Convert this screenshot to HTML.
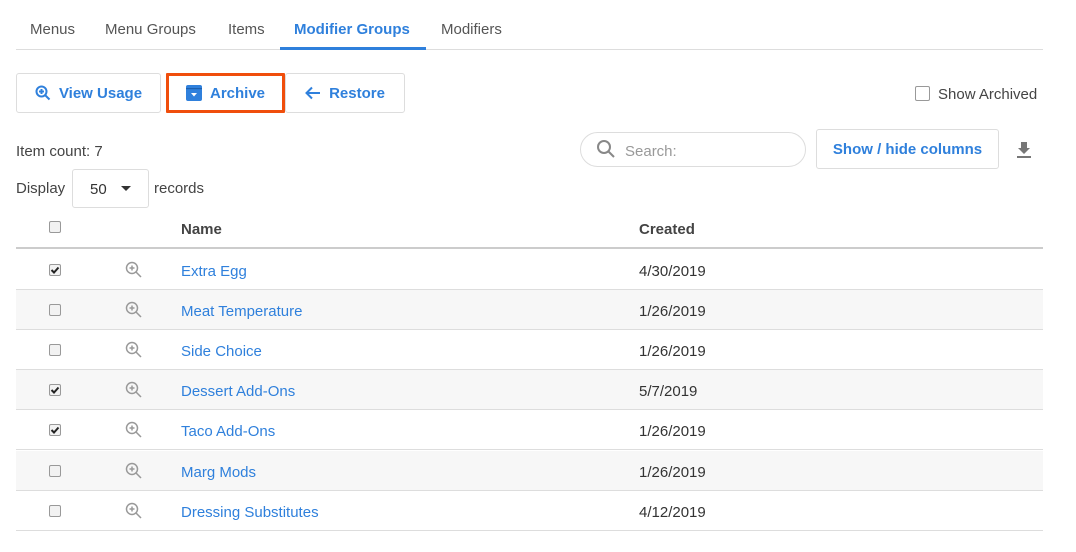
<!DOCTYPE html>
<html><head><style>
*{box-sizing:border-box;margin:0;padding:0}
body{width:1076px;height:552px;background:#fff;font-family:"Liberation Sans",sans-serif;color:#444;font-size:15px;position:relative;overflow:hidden}
.a{position:absolute}
.tab{position:absolute;top:21px;font-size:15px;color:#555}
.btn{position:absolute;border:1px solid #ddd;border-radius:3px;background:#fff;color:#2f80dc;font-weight:bold;font-size:15px;display:flex;align-items:center;justify-content:center;gap:8px}
.row{position:absolute;left:16px;width:1027px;height:40px;border-bottom:1px solid #ddd}
.row.g{background:#f7f7f7}
.cb{position:absolute;left:33px;top:14px;width:12px;height:12px;border:1px solid #999;border-radius:2px;background:#f2f2f2}
.row .mag{position:absolute;left:109px;top:11px}
.row .n{position:absolute;left:165px;top:13px;color:#2f80dc}
.row .d{position:absolute;left:623px;top:13px;color:#333}
</style></head><body>
<div class="tab" style="left:30px">Menus</div>
<div class="tab" style="left:105px">Menu Groups</div>
<div class="tab" style="left:228px">Items</div>
<div class="tab" style="left:294px;color:#2f80dc;font-weight:bold">Modifier Groups</div>
<div class="tab" style="left:441px">Modifiers</div>
<div class="a" style="left:16px;top:49px;width:1027px;height:1px;background:#ddd"></div>
<div class="a" style="left:280px;top:47px;width:146px;height:3px;background:#2f80dc"></div>

<div class="btn" style="left:16px;top:73px;width:145px;height:40px">
<svg width="16" height="16" viewBox="0 0 16 16"><circle cx="6.5" cy="6.5" r="5" fill="none" stroke="#2f80dc" stroke-width="2"/><path d="M10 10l4.5 4.5M6.5 4v5M4 6.5h5" stroke="#2f80dc" stroke-width="2"/></svg>View Usage</div>
<div class="btn" style="left:285px;top:73px;width:120px;height:40px">
<svg width="16" height="14" viewBox="0 0 16 14"><path d="M15 7H2M7 1.5L1.5 7 7 12.5" fill="none" stroke="#2f80dc" stroke-width="2"/></svg>Restore</div>
<div class="btn" style="left:166px;top:73px;width:119px;height:40px;border:3px solid #f04e0c;border-radius:1px">
<svg width="16" height="16" viewBox="0 0 16 16"><rect x="0" y="0" width="16" height="16" rx="2" fill="#2f80dc"/><rect x="0" y="3" width="16" height="1.2" fill="#1c5fae"/><path d="M5 8h6l-3 3.5z" fill="#fff"/></svg>Archive</div>

<div class="a" style="left:915px;top:86px;width:15px;height:15px;border:1px solid #999;border-radius:2px"></div>
<div class="a" style="left:938px;top:86px;color:#444">Show Archived</div>

<div class="a" style="left:16px;top:143px;color:#444">Item count: 7</div>
<div class="a" style="left:580px;top:132px;width:226px;height:35px;border:1px solid #ddd;border-radius:18px"></div>
<svg class="a" style="left:596px;top:139px" width="20" height="20" viewBox="0 0 20 20"><circle cx="8" cy="8" r="6" fill="none" stroke="#888" stroke-width="2"/><path d="M12.5 12.5l5.5 5.5" stroke="#888" stroke-width="2"/></svg>
<div class="a" style="left:625px;top:143px;color:#999">Search:</div>
<div class="btn" style="left:816px;top:129px;width:183px;height:40px">Show / hide columns</div>
<svg class="a" style="left:1016px;top:141px" width="16" height="17" viewBox="0 0 16 17"><path d="M5 1h6v6h3l-6 6-6-6h3z" fill="#777"/><rect x="1" y="15" width="14" height="2" fill="#777"/></svg>

<div class="a" style="left:16px;top:180px">Display</div>
<div class="a" style="left:72px;top:169px;width:77px;height:39px;border:1px solid #ddd;border-radius:3px"></div>
<div class="a" style="left:90px;top:181px;color:#333">50</div>
<div class="a" style="left:121px;top:186px;width:0;height:0;border-left:5px solid transparent;border-right:5px solid transparent;border-top:5px solid #333"></div>
<div class="a" style="left:154px;top:180px">records</div>

<div class="a" style="left:49px;top:221px;width:12px;height:12px;border:1px solid #999;border-radius:2px;background:#f2f2f2"></div>
<div class="a" style="left:181px;top:221px;font-weight:bold;color:#444">Name</div>
<div class="a" style="left:639px;top:221px;font-weight:bold;color:#444">Created</div>
<div class="a" style="left:16px;top:247px;width:1027px;height:2px;background:#ccc"></div>

<div class="row" style="top:250px"><div class="cb">
<svg width="10" height="10" viewBox="0 0 10 10" style="position:absolute;left:0;top:0"><path d="M1.5 5l2.5 2.5 4.5-5" fill="none" stroke="#222" stroke-width="2"/></svg></div><svg class="mag" width="18" height="18" viewBox="0 0 18 18"><circle cx="7" cy="7" r="5.5" fill="none" stroke="#999" stroke-width="1.5"/><path d="M11 11l5 5M7 4.5v5M4.5 7h5" stroke="#999" stroke-width="1.5"/></svg><div class="n">Extra Egg</div><div class="d">4/30/2019</div></div>
<div class="row g" style="top:290px"><div class="cb"></div><svg class="mag" width="18" height="18" viewBox="0 0 18 18"><circle cx="7" cy="7" r="5.5" fill="none" stroke="#999" stroke-width="1.5"/><path d="M11 11l5 5M7 4.5v5M4.5 7h5" stroke="#999" stroke-width="1.5"/></svg><div class="n">Meat Temperature</div><div class="d">1/26/2019</div></div>
<div class="row" style="top:330px"><div class="cb"></div><svg class="mag" width="18" height="18" viewBox="0 0 18 18"><circle cx="7" cy="7" r="5.5" fill="none" stroke="#999" stroke-width="1.5"/><path d="M11 11l5 5M7 4.5v5M4.5 7h5" stroke="#999" stroke-width="1.5"/></svg><div class="n">Side Choice</div><div class="d">1/26/2019</div></div>
<div class="row g" style="top:370px"><div class="cb"><svg width="10" height="10" viewBox="0 0 10 10" style="position:absolute;left:0;top:0"><path d="M1.5 5l2.5 2.5 4.5-5" fill="none" stroke="#222" stroke-width="2"/></svg></div><svg class="mag" width="18" height="18" viewBox="0 0 18 18"><circle cx="7" cy="7" r="5.5" fill="none" stroke="#999" stroke-width="1.5"/><path d="M11 11l5 5M7 4.5v5M4.5 7h5" stroke="#999" stroke-width="1.5"/></svg><div class="n">Dessert Add-Ons</div><div class="d">5/7/2019</div></div>
<div class="row" style="top:410px"><div class="cb"><svg width="10" height="10" viewBox="0 0 10 10" style="position:absolute;left:0;top:0"><path d="M1.5 5l2.5 2.5 4.5-5" fill="none" stroke="#222" stroke-width="2"/></svg></div><svg class="mag" width="18" height="18" viewBox="0 0 18 18"><circle cx="7" cy="7" r="5.5" fill="none" stroke="#999" stroke-width="1.5"/><path d="M11 11l5 5M7 4.5v5M4.5 7h5" stroke="#999" stroke-width="1.5"/></svg><div class="n">Taco Add-Ons</div><div class="d">1/26/2019</div></div>
<div class="row g" style="top:451px"><div class="cb"></div><svg class="mag" width="18" height="18" viewBox="0 0 18 18"><circle cx="7" cy="7" r="5.5" fill="none" stroke="#999" stroke-width="1.5"/><path d="M11 11l5 5M7 4.5v5M4.5 7h5" stroke="#999" stroke-width="1.5"/></svg><div class="n">Marg Mods</div><div class="d">1/26/2019</div></div>
<div class="row" style="top:491px"><div class="cb"></div><svg class="mag" width="18" height="18" viewBox="0 0 18 18"><circle cx="7" cy="7" r="5.5" fill="none" stroke="#999" stroke-width="1.5"/><path d="M11 11l5 5M7 4.5v5M4.5 7h5" stroke="#999" stroke-width="1.5"/></svg><div class="n">Dressing Substitutes</div><div class="d">4/12/2019</div></div>
</body></html>
